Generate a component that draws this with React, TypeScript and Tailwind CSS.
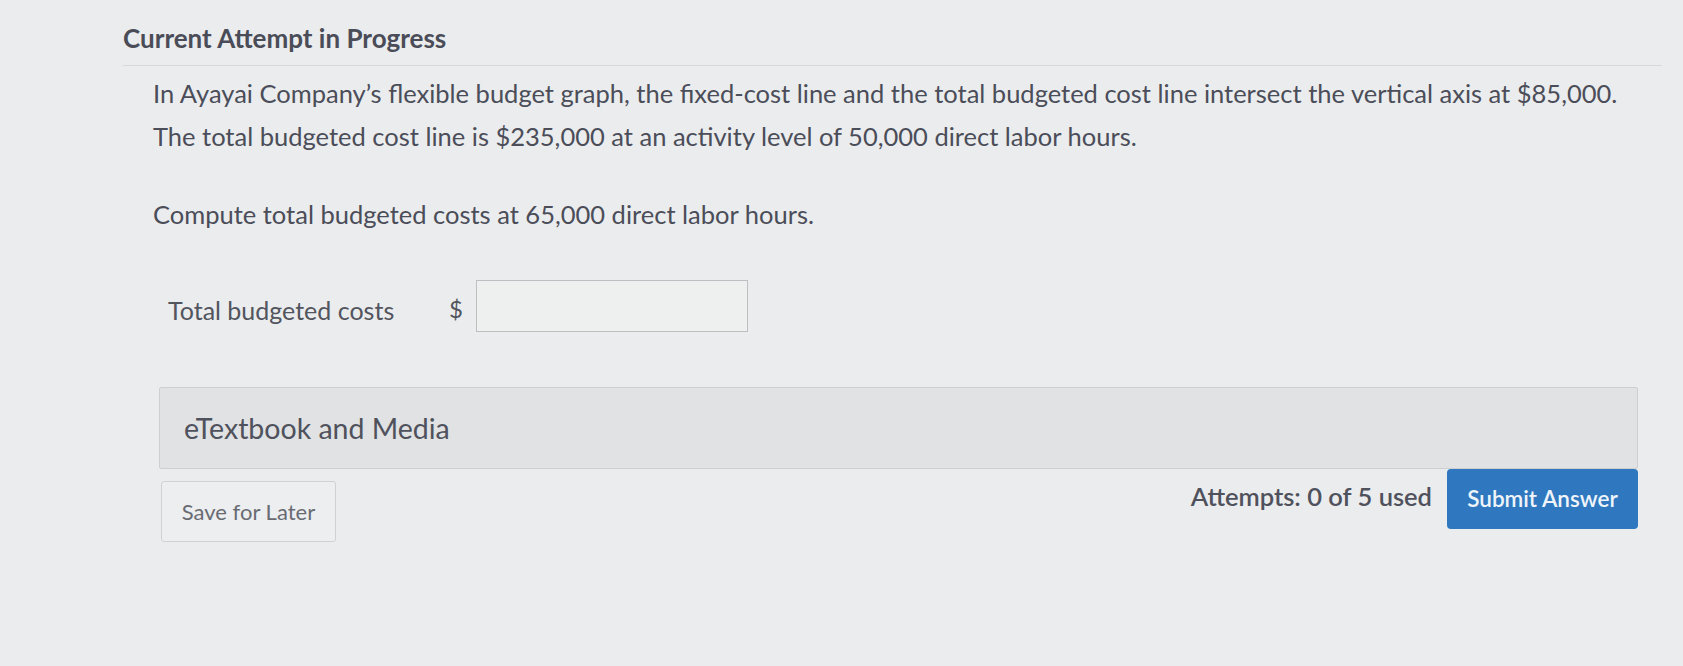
export default function App() {
  return (
    <div className="min-h-[666px] w-full bg-[#eaeced] font-['Lato','Liberation_Sans',sans-serif] text-[#4b4d59]">
      <div className="pl-[123px] pr-[21px] pt-[21px]">
        <h2 className="text-[26px] font-bold leading-[34px] text-[#4a4c58]">
          Current Attempt in Progress
        </h2>
        <div className="mt-[10px] border-t border-[#d6d8da]">
          <div className="pl-[30px] pr-[24px] pt-[6px]">
            <p className="text-[25.5px] leading-[43px]">
              In Ayayai Company’s flexible budget graph, the fixed-cost line and the total budgeted cost line
              intersect the vertical axis at $85,000.
              <br />
              The total budgeted cost line is $235,000 at an activity level of 50,000 direct labor hours.
            </p>
            <p className="mt-[35px] text-[25.5px] leading-[43px]">
              Compute total budgeted costs at 65,000 direct labor hours.
            </p>

            <div className="mt-[44px] flex items-center pl-[15px]">
              <span className="mt-[10px] w-[281px] text-[25px] text-[#52545e]">Total budgeted costs</span>
              <span className="mr-[13px] mt-[6px] text-[24px] text-[#52545e]">$</span>
              <input
                type="text"
                className="h-[52px] w-[272px] border border-[#bdbfc2] bg-[#eef0f0] px-2 text-[20px] outline-none"
              />
            </div>

            <div className="ml-[6px] mt-[55px] flex h-[82px] items-center rounded-[2px] border border-[#cdcfd1] bg-[#e0e2e3] pl-[24px]">
              <span className="text-[28.5px] text-[#4f515c]">eTextbook and Media</span>
            </div>

            <div className="ml-[8px] flex items-start justify-between">
              <button className="mt-[12px] h-[61px] w-[175px] rounded-[3px] border border-[#cfd1d3] bg-[#eceeef] text-[22px] text-[#696b73]">
                Save for Later
              </button>
              <div className="flex items-center gap-[15px]">
                <span className="pb-[6px] text-[25.5px] font-semibold text-[#4f515c]">Attempts: 0 of 5 used</span>
                <button className="h-[60px] w-[191px] rounded-[4px] bg-[#2f78bf] text-[22.5px] font-semibold text-[#eef4fa]">
                  Submit Answer
                </button>
              </div>
            </div>
          </div>
        </div>
      </div>
    </div>
  );
}
